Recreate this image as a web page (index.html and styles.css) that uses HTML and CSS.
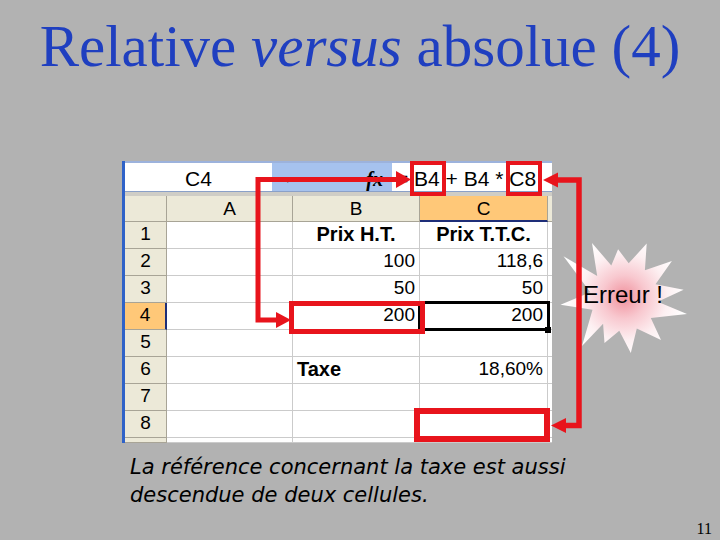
FILE: index.html
```html
<!DOCTYPE html>
<html lang="fr">
<head>
<meta charset="utf-8">
<title>Relative versus absolue (4)</title>
<link rel="stylesheet" href="styles.css">
</head>
<body>
<h1 class="title">Relative <em>versus</em> absolue (4)</h1>

<div class="sheet">
  <div class="fbar">
    <div class="namebox">C4</div>
    <div class="fxzone"><span class="dd">▾</span><span class="fx">fx</span></div>
    <div class="formula">= B4 + B4 * C8</div>
  </div>
  <div class="fgap"></div>
  <div class="grid">
    <div class="rh corner"></div><div class="ch">A</div><div class="ch">B</div><div class="ch sel">C</div><div class="ch edge"></div>

    <div class="rh">1</div><div class="c"></div><div class="c t">Prix H.T.</div><div class="c t">Prix T.T.C.</div><div class="c edge"></div>
    <div class="rh">2</div><div class="c"></div><div class="c n">100</div><div class="c n">118,6</div><div class="c edge"></div>
    <div class="rh">3</div><div class="c"></div><div class="c n">50</div><div class="c n">50</div><div class="c edge"></div>
    <div class="rh rsel">4</div><div class="c"></div><div class="c n">200</div><div class="c n cur">200</div><div class="c edge"></div>
    <div class="rh">5</div><div class="c"></div><div class="c"></div><div class="c"></div><div class="c edge"></div>
    <div class="rh">6</div><div class="c"></div><div class="c l">Taxe</div><div class="c n">18,60%</div><div class="c edge"></div>
    <div class="rh">7</div><div class="c"></div><div class="c"></div><div class="c"></div><div class="c edge"></div>
    <div class="rh">8</div><div class="c"></div><div class="c"></div><div class="c"></div><div class="c edge"></div>
    <div class="rh"></div><div class="c"></div><div class="c"></div><div class="c"></div><div class="c edge"></div>
  </div>
</div>

<p class="caption">La référence concernant la taxe est aussi<br>descendue de deux cellules.</p>
<div class="pagenum">11</div>

<svg class="overlay" width="720" height="540" viewBox="0 0 720 540">
  <defs>
    <radialGradient id="burst" cx="624" cy="297" r="62" gradientUnits="userSpaceOnUse">
      <stop offset="0" stop-color="#f0909c"/>
      <stop offset="0.35" stop-color="#f8c8cf"/>
      <stop offset="0.7" stop-color="#fdf0f2"/>
      <stop offset="1" stop-color="#ffffff"/>
    </radialGradient>
  </defs>
  <polygon fill="url(#burst)" points="646.7,243.6 644.9,270.2 671.9,260.9 655.5,284.3 683.6,289.7 657.7,301.7 687,314 650.8,317.9 661,340 636.8,328.5 630.8,353 619.3,330.7 604.5,343 603.1,323.8 582,346 592.5,309.8 560.5,304.8 590.3,292.3 563.5,256.2 597.2,276.1 592,243 611.3,265.5 618.1,249.3 628.7,263.3"/>

  <g fill="none" stroke="#e8141c">
    <rect x="412" y="163" width="32" height="31" stroke-width="4"/>
    <rect x="508" y="163" width="32" height="31" stroke-width="4"/>
    <rect x="291.5" y="303.5" width="131" height="28" stroke-width="5"/>
    <rect x="417" y="411" width="130" height="28" stroke-width="6"/>
    <polyline points="398,179.5 258,179.5 258,320 278,320" stroke-width="5"/>
    <polyline points="556,180 579,180 579,425.5 564,425.5" stroke-width="5.5"/>
  </g>
  <g fill="#e8141c">
    <polygon points="396,171 411,179.5 396,188"/>
    <polygon points="276,312 291,320 276,328"/>
    <polygon points="558,172.5 543,180 558,187.5"/>
    <polygon points="566,418 551,425.5 566,433"/>
  </g>
</svg>
<div class="erreur">Erreur !</div>
</body>
</html>
```

FILE: styles.css
```css
html, body {
  margin: 0;
  padding: 0;
  width: 720px;
  height: 540px;
  overflow: hidden;
}
body {
  background: #b2b2b2;
  position: relative;
  font-family: "Liberation Sans", Arial, sans-serif;
}

.title {
  margin: 0;
  font-family: "Liberation Serif", "Times New Roman", serif;
  font-weight: normal;
  font-size: 59px;
  line-height: 92px;
  color: #1f3fc0;
  text-align: center;
}
.title em {
  font-style: italic;
}

/* spreadsheet */
.sheet {
  margin: 69px 0 0 122px;
  width: 427px;
  border-left: 3px solid #2f62c8;
  background: #c8c6c0;
}
.fbar {
  display: flex;
  height: 30px;
  border-top: 2px solid #9cb2dc;
  box-sizing: border-box;
  font-size: 21px;
  line-height: 24px;
}
.namebox {
  width: 147px;
  background: #fff;
  text-align: center;
  padding-top: 4px;
  box-sizing: border-box;
}
.fxzone {
  width: 120px;
  background: #a6c2ee;
  display: flex;
  justify-content: space-between;
  padding: 4px 9px 0 13px;
  box-sizing: border-box;
}
.dd {
  font-size: 11px;
  color: #333;
  line-height: 24px;
}
.fx {
  font-family: "Liberation Serif", serif;
  font-style: italic;
  font-weight: bold;
  font-size: 20px;
}
.formula {
  flex: 1;
  background: #fff;
  padding: 4px 0 0 4px;
  white-space: nowrap;
  overflow: hidden;
}
.fgap {
  height: 5px;
  border-top: 1px solid #8aa0c8;
  box-sizing: border-box;
  background: #cfcdc6;
}

.grid {
  display: grid;
  grid-template-columns: 42px 126px 127px 128px 4px;
  grid-template-rows: 26px repeat(8, 27px) 5px;
  font-size: 19px;
  line-height: 24px;
}
.grid > div {
  box-sizing: border-box;
  white-space: nowrap;
}
.rh, .ch {
  background: #ece9d8;
  border-right: 1px solid #a8a496;
  border-bottom: 1px solid #a8a496;
  text-align: center;
  color: #000;
}
.ch {
  line-height: 25px;
}
.ch.sel {
  background: #ffc878;
  border-bottom: 2px solid #1e2e78;
}
.rh.rsel {
  background: #ffc878;
  border-right: 2px solid #1e2e78;
}
.c {
  background: #fff;
  border-right: 1px solid #cbcbcb;
  border-bottom: 1px solid #cbcbcb;
  padding: 0 4px;
  overflow: hidden;
}
.c.edge, .ch.edge {
  padding: 0;
  border-right: 0;
}
.n { text-align: right; }
.t { text-align: center; font-weight: bold; padding: 0; font-size: 20px; }
.l { text-align: left; font-weight: bold; font-size: 20px; }

.c.cur {
  position: relative;
  overflow: visible;
}
.c.cur::after {
  content: "";
  position: absolute;
  left: -2px;
  top: -2px;
  right: -3px;
  bottom: -2px;
  border: 3px solid #000;
}
.c.cur::before {
  content: "";
  position: absolute;
  right: -4px;
  bottom: -4px;
  width: 6px;
  height: 6px;
  background: #000;
  z-index: 1;
}

.caption {
  margin: 10px 0 0 130px;
  font-family: "DejaVu Sans", Verdana, sans-serif;
  font-style: italic;
  font-size: 21px;
  line-height: 28px;
  color: #000;
}
.pagenum {
  margin-top: 10px;
  text-align: right;
  padding-right: 8px;
  font-family: "Liberation Serif", serif;
  font-size: 16px;
  line-height: 20px;
}

.overlay {
  position: absolute;
  left: 0;
  top: 0;
  pointer-events: none;
}
.erreur {
  position: absolute;
  left: 583px;
  top: 283px;
  font-size: 24px;
  line-height: 24px;
  color: #000;
}
```
